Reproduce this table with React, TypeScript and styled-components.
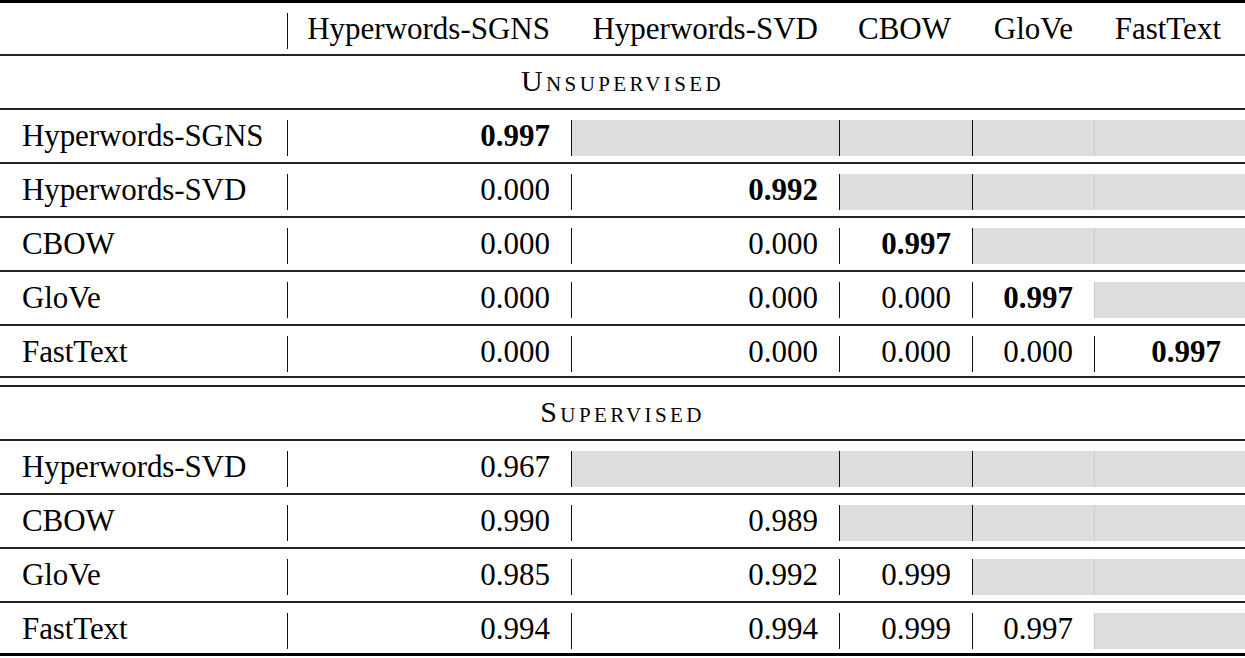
import React from 'react';
import styled, { createGlobalStyle } from 'styled-components';

type Cell = { v: string; bold?: boolean } | 'grey';

interface RowData {
  label: string;
  cells: Cell[];
}

const headers = ['Hyperwords-SGNS', 'Hyperwords-SVD', 'CBOW', 'GloVe', 'FastText'];

const unsupervised: RowData[] = [
  { label: 'Hyperwords-SGNS', cells: [{ v: '0.997', bold: true }, 'grey', 'grey', 'grey', 'grey'] },
  { label: 'Hyperwords-SVD', cells: [{ v: '0.000' }, { v: '0.992', bold: true }, 'grey', 'grey', 'grey'] },
  { label: 'CBOW', cells: [{ v: '0.000' }, { v: '0.000' }, { v: '0.997', bold: true }, 'grey', 'grey'] },
  { label: 'GloVe', cells: [{ v: '0.000' }, { v: '0.000' }, { v: '0.000' }, { v: '0.997', bold: true }, 'grey'] },
  { label: 'FastText', cells: [{ v: '0.000' }, { v: '0.000' }, { v: '0.000' }, { v: '0.000' }, { v: '0.997', bold: true }] },
];

const supervised: RowData[] = [
  { label: 'Hyperwords-SVD', cells: [{ v: '0.967' }, 'grey', 'grey', 'grey', 'grey'] },
  { label: 'CBOW', cells: [{ v: '0.990' }, { v: '0.989' }, 'grey', 'grey', 'grey'] },
  { label: 'GloVe', cells: [{ v: '0.985' }, { v: '0.992' }, { v: '0.999' }, 'grey', 'grey'] },
  { label: 'FastText', cells: [{ v: '0.994' }, { v: '0.994' }, { v: '0.999' }, { v: '0.997' }, 'grey'] },
];

const GlobalStyle = createGlobalStyle`
  html, body {
    margin: 0;
    padding: 0;
    background: #fff;
  }
  body {
    font-family: "Liberation Serif", "Times New Roman", serif;
    color: #000;
  }
`;

const App: React.FC = () => {
  const renderRows = (rows: RowData[]) =>
    rows.map((row, idx) => (
      <Row key={row.label} $h={idx === rows.length - 1 ? 50 : 52} $last={idx === rows.length - 1}>
        <LabelCell>{row.label}</LabelCell>
        {row.cells.map((cell, ci) =>
          cell === 'grey' ? (
            <GreyCell key={ci} $faint={ci === 4} />
          ) : (
            <ValueCell key={ci} $bold={cell.bold} $wide={ci === 4}>
              {cell.v}
            </ValueCell>
          )
        )}
      </Row>
    ));

  return (
    <>
      <GlobalStyle />
      <Table>
        <HeaderRow>
          <LabelCell />
          {headers.map((h, i) => (
            <HeaderCell key={h} $first={i === 0} $wide={i === 4}>
              {h}
            </HeaderCell>
          ))}
        </HeaderRow>
        <SectionRow>
          <SectionTitle>Unsupervised</SectionTitle>
        </SectionRow>
        {renderRows(unsupervised)}
        <DoubleRule />
        <SectionRow>
          <SectionTitle>Supervised</SectionTitle>
        </SectionRow>
        {renderRows(supervised)}
      </Table>
    </>
  );
};

const columns = '287px 284px 268px 133px 122px 1fr';

const Table = styled.div`
  width: 1245px;
  border-top: 3px solid #000;
  border-bottom: 3px solid #000;
  font-size: 31px;
`;

const HeaderRow = styled.div`
  display: grid;
  grid-template-columns: ${columns};
  align-items: start;
  height: 41px;
  padding-top: 10px;
  border-bottom: 2px solid #222;
`;

const Row = styled.div<{ $h: number; $last?: boolean }>`
  display: grid;
  grid-template-columns: ${columns};
  align-items: start;
  height: ${(p) => p.$h - 10}px;
  padding-top: 10px;
  border-bottom: ${(p) => (p.$last ? 'none' : '2px solid #222')};
`;

const SectionRow = styled.div`
  display: flex;
  justify-content: center;
  height: 43px;
  padding-top: 9px;
  border-bottom: 2px solid #222;
`;

const SectionTitle = styled.span`
  font-variant: small-caps;
  font-size: 30px;
  line-height: 32px;
  letter-spacing: 3.4px;
  text-transform: capitalize;
`;

const DoubleRule = styled.div`
  height: 7px;
  border-top: 2px solid #222;
  border-bottom: 2px solid #222;
`;

const BaseCell = styled.div`
  height: 36px;
  line-height: 32px;
  white-space: nowrap;
  box-sizing: border-box;
`;

const LabelCell = styled(BaseCell)`
  padding-left: 22px;
  letter-spacing: -0.1px;
`;

const HeaderCell = styled(BaseCell)<{ $first?: boolean; $wide?: boolean }>`
  text-align: right;
  padding-right: ${(p) => (p.$wide ? 24 : 21)}px;
  border-left: ${(p) => (p.$first ? '1.6px solid #111' : 'none')};
`;

const ValueCell = styled(BaseCell)<{ $bold?: boolean; $wide?: boolean }>`
  text-align: right;
  padding-right: ${(p) => (p.$wide ? 24 : 21)}px;
  border-left: 1.6px solid #111;
  font-weight: ${(p) => (p.$bold ? 700 : 400)};
`;

const GreyCell = styled(BaseCell)<{ $faint?: boolean }>`
  background: #dddddd;
  border-left: 1.6px solid ${(p) => (p.$faint ? '#cbcbcb' : '#111')};
`;

export default App;
